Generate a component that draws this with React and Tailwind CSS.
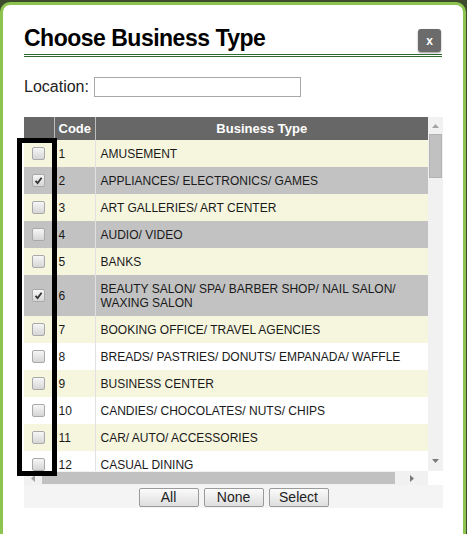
import React, { useState } from 'react'

const rows = [
  { code: 1, name: 'AMUSEMENT', bg: 'bg-[#f6f6df]' },
  { code: 2, name: 'APPLIANCES/ ELECTRONICS/ GAMES', bg: 'bg-[#c2c2c2]', checked: true },
  { code: 3, name: 'ART GALLERIES/ ART CENTER', bg: 'bg-[#f6f6df]' },
  { code: 4, name: 'AUDIO/ VIDEO', bg: 'bg-[#c2c2c2]' },
  { code: 5, name: 'BANKS', bg: 'bg-[#f6f6df]' },
  { code: 6, name: 'BEAUTY SALON/ SPA/ BARBER SHOP/ NAIL SALON/ WAXING SALON', bg: 'bg-[#c2c2c2]', checked: true },
  { code: 7, name: 'BOOKING OFFICE/ TRAVEL AGENCIES', bg: 'bg-[#f6f6df]' },
  { code: 8, name: 'BREADS/ PASTRIES/ DONUTS/ EMPANADA/ WAFFLE', bg: 'bg-white' },
  { code: 9, name: 'BUSINESS CENTER', bg: 'bg-[#f6f6df]' },
  { code: 10, name: 'CANDIES/ CHOCOLATES/ NUTS/ CHIPS', bg: 'bg-white' },
  { code: 11, name: 'CAR/ AUTO/ ACCESSORIES', bg: 'bg-[#f6f6df]' },
  { code: 12, name: 'CASUAL DINING', bg: 'bg-white' },
]

// checkbox drawn by hand so it looks like the old grey one
function Check({ checked, onClick }) {
  return (
    <span
      onClick={onClick}
      className="flex items-center justify-center w-[13px] h-[13px] rounded-[2px] border border-[#a9a9a9] bg-gradient-to-b from-[#f6f6f6] to-[#d6d6d6] mx-auto"
    >
      {checked && (
        <svg width="9" height="9" viewBox="0 0 9 9">
          <path d="M1.5 4.8 L3.6 7 L7.6 1.8" fill="none" stroke="#333" strokeWidth="1.8" />
        </svg>
      )}
    </span>
  )
}

function Btn({ children }) {
  return (
    <button className="h-[19px] w-[60px] border border-[#9a9a9a] rounded-[2px] bg-gradient-to-b from-[#fbfbfb] to-[#dedede] text-[14px] leading-[17px] text-[#222]">
      {children}
    </button>
  )
}

export default function App() {
  const [checks, setChecks] = useState(rows.map((r) => !!r.checked))

  const toggle = (i) => {
    const next = [...checks]
    next[i] = !next[i]
    setChecks(next)
  }

  return (
    <div className="w-[467px] h-[534px] overflow-hidden bg-[#3d4a2c] pt-[2px] pr-[1px]" style={{ fontFamily: '"Liberation Sans", Arial, sans-serif' }}>
      <div className="relative h-[560px] bg-white border-[3px] border-[#8dc450] rounded-[10px]">
        {/* titre */}
        <div className="mx-[21px] pt-[19px] pb-[2px] flex items-end justify-between border-b-[3px] border-double border-[#2f6a2f]">
          <h1 className="text-[23px] leading-[28px] font-bold tracking-[-0.5px] text-black">Choose Business Type</h1>
          <button className="w-[23px] h-[23px] mr-[1px] rounded-[3px] bg-[#6b6b6b] text-white text-[12px] font-bold leading-none shadow-[0_1px_2px_rgba(0,0,0,0.4)]">
            x
          </button>
        </div>

        {/* location */}
        <div className="ml-[21px] mt-[20px] flex items-center gap-[5px]">
          <label className="text-[16px] leading-[20px] text-[#222]">Location:</label>
          <input className="w-[207px] h-[20px] border border-[#a9a9a9] outline-none px-1 text-[13px]" />
        </div>

        {/* table */}
        <div className="ml-[21px] mt-[20px] w-[419px]">
          <div className="flex">
            <div className="w-[404px] h-[354px] overflow-hidden">
              <table className="w-[404px] table-fixed border-collapse text-[12px] text-[#1a1a1a]">
                <colgroup>
                  <col className="w-[30px]" />
                  <col className="w-[41px]" />
                  <col />
                </colgroup>
                <thead>
                  <tr className="bg-[#676767] text-white text-[13px] font-bold h-[23px]">
                    <th className="border-r border-[#bdbdbd]"></th>
                    <th className="text-left pl-[4px] border-r border-[#bdbdbd]">Code</th>
                    <th className="text-center">Business Type</th>
                  </tr>
                </thead>
                <tbody>
                  {rows.map((r, i) => (
                    <tr key={r.code} className={r.bg}>
                      <td className="py-[6.5px] border-r border-[#e2e2e2]">
                        <Check checked={checks[i]} onClick={() => toggle(i)} />
                      </td>
                      <td className="pl-[4px] leading-[14px] py-[6.5px] border-r border-[#e2e2e2]">{r.code}</td>
                      <td className="pl-[5px] pr-[8px] leading-[14px] py-[6.5px]">{r.name}</td>
                    </tr>
                  ))}
                </tbody>
              </table>
            </div>
            {/* barre verticale */}
            <div className="w-[15px] h-[354px] bg-[#f1f1f1] flex flex-col items-center">
              <div className="h-[17px] flex items-center justify-center">
                <svg width="7" height="4" viewBox="0 0 7 4"><path d="M0 4 L3.5 0 L7 4 Z" fill="#a3a3a3" /></svg>
              </div>
              <div className="w-[13px] h-[44px] bg-[#c1c1c1] border border-[#b3b3b3]"></div>
              <div className="flex-1" />
              <div className="h-[17px] flex items-center justify-center pb-[4px]">
                <svg width="7" height="4" viewBox="0 0 7 4"><path d="M0 0 L3.5 4 L7 0 Z" fill="#7a7a7a" /></svg>
              </div>
            </div>
          </div>
          {/* barre horizontale */}
          <div className="flex h-[14px]">
            <div className="w-[404px] bg-[#f1f1f1] flex items-center">
              <div className="w-[18px] flex justify-center">
                <svg width="4" height="7" viewBox="0 0 4 7"><path d="M4 0 L0 3.5 L4 7 Z" fill="#a3a3a3" /></svg>
              </div>
              <div className="w-[353px] h-[12px] bg-[#c1c1c1]"></div>
              <div className="flex-1 flex justify-center">
                <svg width="4" height="7" viewBox="0 0 4 7"><path d="M0 0 L4 3.5 L0 7 Z" fill="#7a7a7a" /></svg>
              </div>
            </div>
            <div className="w-[15px] bg-white"></div>
          </div>
          {/* boutons */}
          <div className="h-[23px] bg-[#f4f4f4] flex items-center justify-center gap-[5px] pt-[1px]">
            <Btn>All</Btn>
            <Btn>None</Btn>
            <Btn>Select</Btn>
          </div>
        </div>

        {/* cadre noir d'annotation */}
        <div className="absolute left-[14px] top-[133px] w-[40px] h-[338px] border-[5px] border-black pointer-events-none"></div>
      </div>
    </div>
  )
}
